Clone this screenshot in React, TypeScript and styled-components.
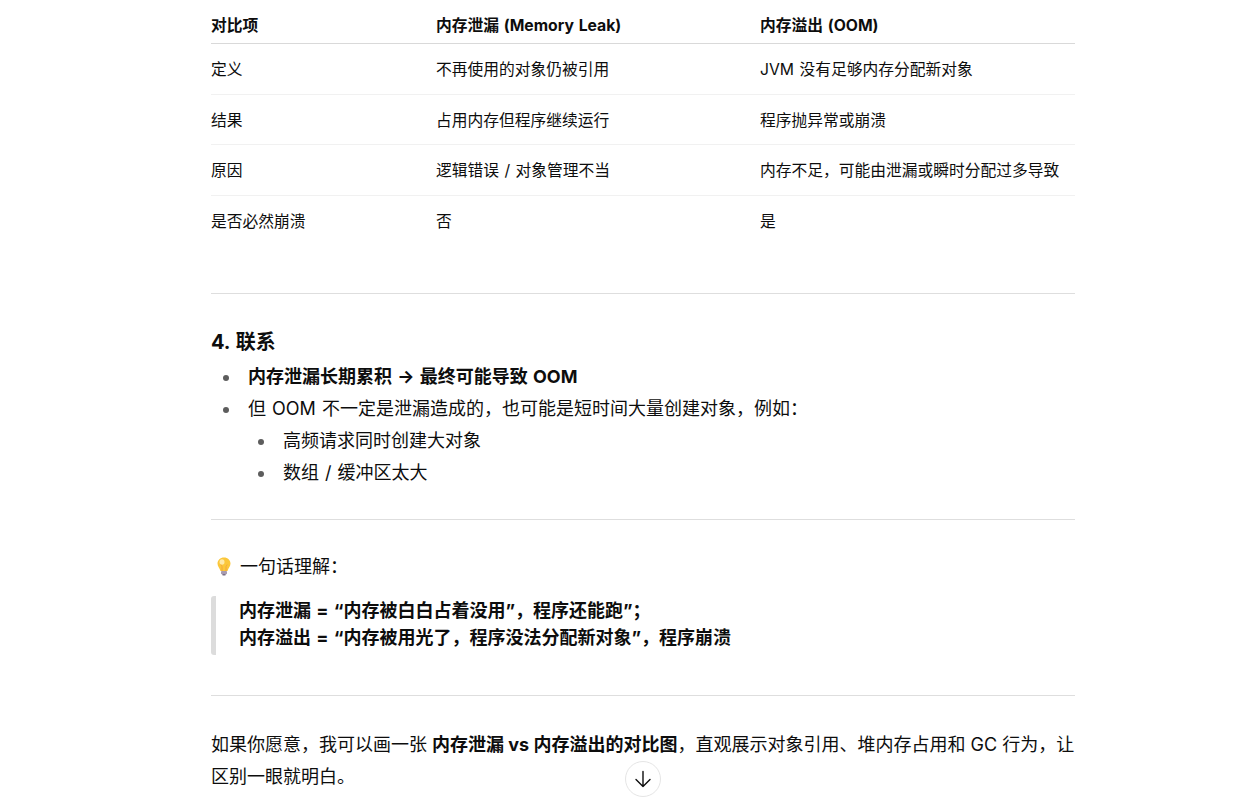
import React from "react";
import styled, { createGlobalStyle } from "styled-components";

const Global = createGlobalStyle`
  html, body { margin: 0; padding: 0; background: #fff; height: 804px; overflow: hidden; }
  body { font-family: "Inter", "Noto Sans CJK SC", sans-serif; color: #0d0d0d; word-spacing: 1px; }
`;

const Page = styled.main`
  width: 864px;
  margin-left: 211px;
  font-size: 18px;
  line-height: 32px;
`;

const Table = styled.table`
  width: 864px;
  border-collapse: collapse;
  table-layout: fixed;
  font-size: 15.75px;
  line-height: 24px;
`;

const HeadCell = styled.th<{ $w: number }>`
  text-align: left;
  font-weight: 700;
  padding: 14px 0 5px;
  border-bottom: 1px solid #d9d9d9;
  width: ${(p) => p.$w}px;
`;

const Row = styled.tr<{ $h: number }>`
  height: ${(p) => p.$h}px;
  border-bottom: 1px solid #f1f1f1;
  &:last-child { border-bottom: 0; }
`;

const Cell = styled.td`
  padding: 2px 0 0;
  vertical-align: middle;
`;

const Rule = styled.hr<{ $top: number; $bottom: number }>`
  border: 0;
  height: 1px;
  background: #dedede;
  margin: ${(p) => p.$top}px 0 ${(p) => p.$bottom}px;
`;

const Heading = styled.h3`
  margin: 0 0 3px;
  font-size: 20px;
  line-height: 32px;
  font-weight: 700;
`;

const List = styled.ul<{ $nested?: boolean }>`
  margin: 0;
  padding: 0 0 0 ${(p) => (p.$nested ? 28 : 30)}px;
  list-style: disc;
  & li::marker { color: #5d5d5d; }
`;

const Item = styled.li`
  padding-left: 7px;
`;

const Strong = styled.strong`
  font-weight: 700;
`;

const Tip = styled.p`
  margin: 0 0 13px;
  display: flex;
  align-items: center;
  gap: 8px;
  padding-left: 5px;
  line-height: 32px;
`;

const Quote = styled.blockquote`
  margin: 0;
  padding: 1px 0 4px 23px;
  border-left: 5px solid #dcdcdc;
  border-radius: 3px;
  line-height: 27px;
  font-weight: 700;
  height: 54px;
`;

const Para = styled.p`
  margin: 0;
  word-spacing: 0;
`;

const ScrollBtn = styled.button`
  position: absolute;
  left: 625px;
  top: 761px;
  width: 36px;
  height: 36px;
  box-sizing: border-box;
  border-radius: 50%;
  border: 1px solid #e5e5e5;
  background: #fff;
  color: #0d0d0d;
  display: flex;
  align-items: center;
  justify-content: center;
  padding: 0;
`;

const rows = [
  { h: 51, c: ["定义", "不再使用的对象仍被引用", "JVM 没有足够内存分配新对象"] },
  { h: 50, c: ["结果", "占用内存但程序继续运行", "程序抛异常或崩溃"] },
  { h: 51, c: ["原因", "逻辑错误 / 对象管理不当", "内存不足，可能由泄漏或瞬时分配过多导致"] },
  { h: 50, c: ["是否必然崩溃", "否", "是"] },
];

const Bulb = () => (
  <svg width="16" height="19" viewBox="0 0 16 19" aria-hidden="true">
    <path d="M8 0.5C4.2 0.5 1.5 3.2 1.5 6.6c0 3 2.2 4.4 3 7.4h7c.8-3 3-4.4 3-7.4C14.500 3.200 11.800 0.500 8 0.500z" fill="#fbc73a" />
    <ellipse cx="6" cy="5" rx="2.500" ry="2.800" fill="#fee9a8" />
    <path d="M6 14V9.500L4.800 7.500M10 14V9.500L11.200 7.500" stroke="#f0a040" strokeWidth="0.8" fill="none" />
    <rect x="5" y="14" width="6" height="3.200" rx="0.800" fill="#a89bb0" />
    <rect x="6.200" y="17" width="3.600" height="1.600" rx="0.800" fill="#7b6f86" />
  </svg>
);

export default function App() {
  return (
    <Page>
      <Global />
      <Table>
        <thead>
          <tr>
            <HeadCell $w={225}>对比项</HeadCell>
            <HeadCell $w={324}>内存泄漏 (Memory Leak)</HeadCell>
            <HeadCell $w={315}>内存溢出 (OOM)</HeadCell>
          </tr>
        </thead>
        <tbody>
          {rows.map((r) => (
            <Row key={r.c[0]} $h={r.h}>
              {r.c.map((t) => (
                <Cell key={t}>{t}</Cell>
              ))}
            </Row>
          ))}
        </tbody>
      </Table>
      <Rule $top={47} $bottom={32} />
      <Heading>4. 联系</Heading>
      <List>
        <Item><Strong>内存泄漏长期累积 → 最终可能导致 OOM</Strong></Item>
        <Item>
          但 OOM 不一定是泄漏造成的，也可能是短时间大量创建对象，例如：
          <List $nested>
            <Item>高频请求同时创建大对象</Item>
            <Item>数组 / 缓冲区太大</Item>
          </List>
        </Item>
      </List>
      <Rule $top={30} $bottom={31} />
      <Tip><Bulb />一句话理解：</Tip>
      <Quote>
        内存泄漏 = “内存被白白占着没用”，程序还能跑”；<br />
        内存溢出 = “内存被用光了，程序没法分配新对象”，程序崩溃
      </Quote>
      <Rule $top={40} $bottom={33} />
      <Para>
        如果你愿意，我可以画一张 <Strong>内存泄漏 vs 内存溢出的对比图</Strong>，直观展示对象引用、堆内存占用和 GC 行为，让区别一眼就明白。
      </Para>
      <ScrollBtn aria-label="scroll down">
        <svg width="20" height="20" viewBox="0 0 20 20" fill="none" stroke="currentColor" strokeWidth="1.400" strokeLinecap="round" strokeLinejoin="round">
          <path d="M10 2.500v15M3 10.500l7 7 7-7" />
        </svg>
      </ScrollBtn>
    </Page>
  );
}
